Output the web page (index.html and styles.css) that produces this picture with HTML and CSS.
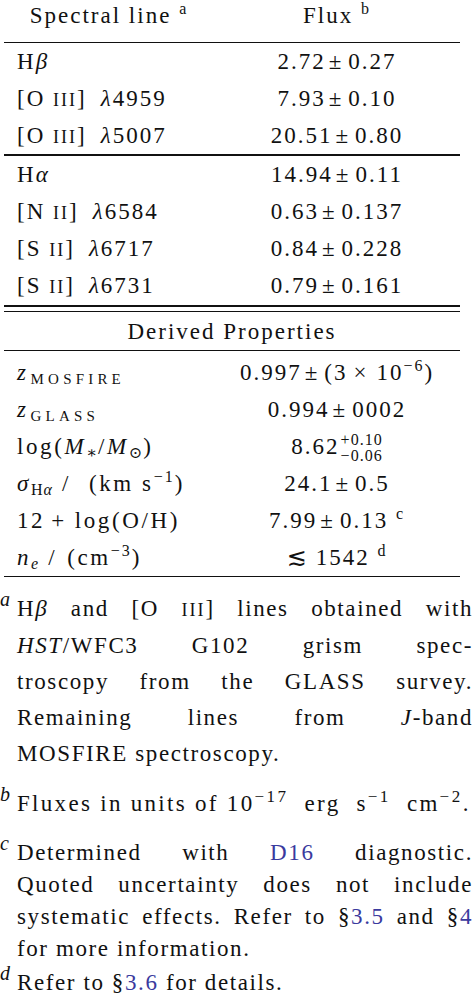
FILE: index.html
```html
<!DOCTYPE html>
<html lang="en">
<head>
<meta charset="utf-8">
<title>Spectral lines</title>
<link rel="stylesheet" href="styles.css">
</head>
<body>
<div class="tbl">
  <div class="row head">
    <div class="l">Spectral line <span class="su">a</span></div>
    <div class="r">Flux <span class="su">b</span></div>
  </div>
  <div class="group g1">
    <div class="row"><div class="l">H<i>β</i></div><div class="r">2.72<span class="pm">±</span>0.27</div></div>
    <div class="row"><div class="l">[O <span class="sc">III</span>]<span class="lam"><i>λ</i>4959</span></div><div class="r">7.93<span class="pm">±</span>0.10</div></div>
    <div class="row"><div class="l">[O <span class="sc">III</span>]<span class="lam"><i>λ</i>5007</span></div><div class="r">20.51<span class="pm">±</span>0.80</div></div>
  </div>
  <div class="group g2">
    <div class="row"><div class="l">H<i>α</i></div><div class="r">14.94<span class="pm">±</span>0.11</div></div>
    <div class="row"><div class="l">[N <span class="sc">II</span>]<span class="lam"><i>λ</i>6584</span></div><div class="r">0.63<span class="pm">±</span>0.137</div></div>
    <div class="row"><div class="l">[S <span class="sc">II</span>]<span class="lam"><i>λ</i>6717</span></div><div class="r">0.84<span class="pm">±</span>0.228</div></div>
    <div class="row"><div class="l">[S <span class="sc">II</span>]<span class="lam"><i>λ</i>6731</span></div><div class="r">0.79<span class="pm">±</span>0.161</div></div>
  </div>
  <div class="dbl"></div>
  <div class="dp">Derived Properties</div>
  <div class="group g3">
    <div class="row"><div class="l"><i>z</i><span class="sb caps">MOSFIRE</span></div><div class="r">0.997<span class="pm">±</span>(3<span class="op">×</span>10<span class="su">−6</span>)</div></div>
    <div class="row"><div class="l"><i>z</i><span class="sb caps">GLASS</span></div><div class="r">0.994<span class="pm">±</span>0002</div></div>
    <div class="row"><div class="l">log(<i>M</i><span class="sb">∗</span>/<i>M</i><span class="sb">⊙</span>)</div><div class="r">8.62<span class="stack"><span>+0.10</span><span>−0.06</span></span></div></div>
    <div class="row"><div class="l"><i>σ</i><span class="sb">H<i>α</i></span><span class="sl wide">/</span>(km s<span class="su">−1</span>)</div><div class="r">24.1<span class="pm">±</span>0.5</div></div>
    <div class="row"><div class="l">12<span class="op">+</span>log(O/H)</div><div class="r">7.99<span class="pm">±</span>0.13 <span class="su">c</span></div></div>
    <div class="row"><div class="l"><i>n</i><span class="sb"><i>e</i></span><span class="sl">/</span>(cm<span class="su">−3</span>)</div><div class="r"><span class="lsim">≲</span>1542 <span class="su">d</span></div></div>
  </div>
</div>

<div class="notes">
  <div class="note na">
    <div class="ln j"><span class="mk">a</span>H<i>β</i> and [O <span class="sc">III</span>] lines obtained with</div>
    <div class="ln j"><i>HST</i>/WFC3 G102 grism spec-</div>
    <div class="ln j">troscopy from the GLASS survey.</div>
    <div class="ln j">Remaining lines from <i>J</i>-band</div>
    <div class="ln">MOSFIRE spectroscopy.</div>
  </div>
  <div class="note nb">
    <div class="ln"><span class="mk">b</span>Fluxes in units of <span class="math">10<span class="su">−17</span> erg s<span class="su">−1</span> cm<span class="su">−2</span></span>.</div>
  </div>
  <div class="note nc">
    <div class="ln j"><span class="mk">c</span>Determined with <span class="lk">D16</span> diagnostic.</div>
    <div class="ln j">Quoted uncertainty does not include</div>
    <div class="ln j">systematic effects. Refer to §<span class="lk">3.5</span> and §<span class="lk">4</span></div>
    <div class="ln">for more information.</div>
  </div>
  <div class="note nd">
    <div class="ln"><span class="mk">d</span>Refer to §<span class="lk">3.6</span> for details.</div>
  </div>
</div>
</body>
</html>
```
FILE: styles.css
```css
html, body {
  margin: 0;
  padding: 0;
  background: #ffffff;
}
body {
  color: #111111;
  font-family: "Liberation Serif", "DejaVu Serif", serif;
  font-size: 23px;
  letter-spacing: 2px;
}
i {
  font-style: italic;
}
.tbl {
  margin-left: 4px;
  width: 456px;
}
.row {
  display: grid;
  grid-template-columns: 210px 246px;
  height: 37px;
  line-height: 37px;
  white-space: nowrap;
}
.row .l {
  padding-left: 13px;
}
.row .r {
  text-align: center;
}
.head {
  height: 42px;
  line-height: 32px;
}
.head .l {
  padding-left: 0;
  text-align: center;
}
.g1 {
  border-top: 1px solid #111111;
}
.g2 {
  border-top: 2px solid #111111;
  padding-bottom: 1px;
}
.dbl {
  border-top: 2px solid #111111;
  border-bottom: 1px solid #111111;
  height: 4px;
}
.dp {
  box-sizing: border-box;
  height: 38px;
  padding-top: 2px;
  line-height: 36px;
  text-align: center;
}
.g3 {
  border-top: 1px solid #111111;
  border-bottom: 1px solid #111111;
  padding-top: 3px;
}
.g3 .l {
  letter-spacing: 2.6px;
}
.su {
  font-size: 16px;
  letter-spacing: 2px;
  line-height: 0;
  vertical-align: 9px;
}
.sb {
  font-size: 16px;
  letter-spacing: 1px;
  line-height: 0;
  vertical-align: -4px;
}
.g3 .l .sb.caps {
  font-size: 15px;
  letter-spacing: 4.2px;
  margin-left: 2px;
}
.sc {
  font-size: 18px;
  letter-spacing: 2px;
}
.lam {
  margin-left: 14px;
}
.pm {
  margin: 0 5px 0 3px;
}
.op {
  margin: 0 8px 0 6px;
}
.sl {
  margin: 0 10px 0 9px;
}
.sl.wide {
  margin: 0 18px 0 9px;
}
.lsim {
  font-family: "DejaVu Sans", sans-serif;
  font-size: 24px;
  margin-right: 7px;
}
.stack {
  display: inline-flex;
  flex-direction: column;
  font-size: 16px;
  letter-spacing: 1px;
  line-height: 16px;
  vertical-align: 9px;
  margin-left: 1px;
  text-align: left;
}
.notes {
  margin-top: 14px;
  width: 456px;
  padding-left: 17px;
}
.ln {
  white-space: nowrap;
  letter-spacing: 1.6px;
}
.ln.j {
  text-align: justify;
  text-align-last: justify;
}
.nb .ln {
  letter-spacing: 2.3px;
}
.math {
  word-spacing: 8px;
}
.math .su {
  font-size: 17px;
  letter-spacing: 2.5px;
}
.na .ln,
.nb .ln {
  line-height: 36px;
}
.nb {
  margin-top: 14px;
}
.nc {
  margin-top: 15px;
}
.nc .ln,
.nd .ln {
  line-height: 32px;
}
.nd {
  margin-top: 2px;
}
.mk {
  display: inline-block;
  width: 17px;
  margin-left: -17px;
  font-style: italic;
  font-size: 20px;
  letter-spacing: 0;
  line-height: 0;
  vertical-align: 10px;
}
.lk {
  color: #3a3a9e;
}
```
